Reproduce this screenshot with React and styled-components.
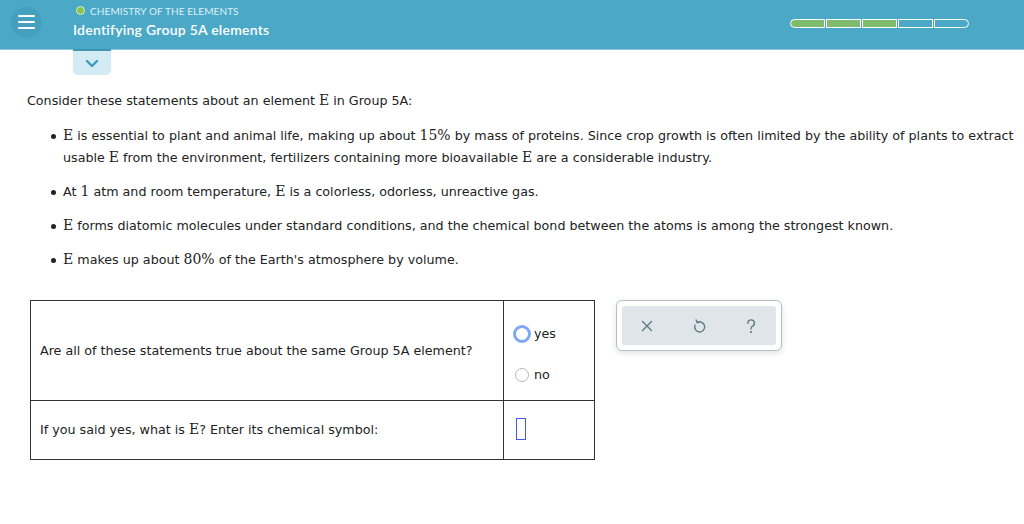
import React from "react";
import styled, { createGlobalStyle } from "styled-components";

const Global = createGlobalStyle`
  html, body { margin: 0; padding: 0; background: #fff; }
  body { font-family: "DejaVu Sans", Verdana, sans-serif; color: #222; }
  * { box-sizing: border-box; }
`;

const Page = styled.div`
  width: 1024px;
  height: 524px;
  overflow: hidden;
  position: relative;
`;

const Header = styled.header`
  height: 50px;
  background: #4ba9c7;
  border-bottom: 1px solid #8ccbdd;
  display: flex;
  align-items: center;
  padding: 0 0 0 11px;
`;

const MenuButton = styled.div`
  width: 31px;
  height: 31px;
  border-radius: 50%;
  background: #45a0bd;
  display: flex;
  flex-direction: column;
  align-items: center;
  justify-content: center;
  gap: 4px;
  margin-top: -5px;
`;

const MenuLine = styled.span`
  display: block;
  width: 17px;
  height: 2px;
  background: #fff;
  border-radius: 1px;
`;

const TitleBlock = styled.div`
  margin-left: 31px;
  display: flex;
  flex-direction: column;
  margin-top: -7px;
`;

const Topic = styled.div`
  display: flex;
  align-items: center;
  gap: 5px;
  font-family: "Lato", "Open Sans", sans-serif;
  font-size: 10px;
  color: #dff1f6;
  letter-spacing: 0.1px;
  margin-left: 3px;
`;

const Dot = styled.span`
  width: 9px;
  height: 9px;
  border-radius: 50%;
  background: #8bc34a;
  border: 1px solid #d8efd0;
`;

const Title = styled.div`
  font-family: "Lato", "Open Sans", sans-serif;
  font-size: 14px;
  font-weight: 600;
  color: #fff;
  margin-top: 4px;
  letter-spacing: 0.25px;
`;

const Progress = styled.div`
  margin-left: auto;
  margin-right: 55px;
  margin-top: -2px;
  display: flex;
  gap: 1px;
`;

const Seg = styled.span`
  width: 35px;
  height: 9px;
  border: 1.5px solid #fff;
  background: ${(p) => (p.$done ? "#80bc6e" : "transparent")};
  border-radius: ${(p) => (p.$first ? "5px 0 0 5px" : p.$last ? "0 5px 5px 0" : "0")};
`;

const Tab = styled.div`
  position: absolute;
  left: 73px;
  top: 49px;
  width: 38px;
  height: 26px;
  background: #d3ecf3;
  border-top: 2px solid #3f95b2;
  border-radius: 0 0 5px 5px;
  display: flex;
  align-items: center;
  justify-content: center;
`;

const Content = styled.main`
  padding: 40px 0 0 27px;
  font-size: 12.7px;
  line-height: 22px;
`;

const Intro = styled.p`
  margin: 0;
`;

const List = styled.ul`
  margin: 13px 0 0;
  padding-left: 36px;
  list-style: none;
`;

const Item = styled.li`
  position: relative;
  margin-bottom: 12px;
  &::before {
    content: "";
    position: absolute;
    left: -12px;
    top: 9px;
    width: 5px;
    height: 5px;
    border-radius: 50%;
    background: #222;
  }
`;

const M = styled.span`
  font-family: "DejaVu Serif", "Liberation Serif", serif;
  font-size: 14px;
  line-height: 1;
`;

const Row = styled.div`
  display: flex;
  align-items: flex-start;
  gap: 21px;
  margin-top: 29px;
  margin-left: 3px;
`;

const Table = styled.table`
  border-collapse: collapse;
  width: 565px;
  border: 1px solid #333;
`;

const Cell = styled.td`
  border: 1px solid #333;
  border-top: ${(p) => (p.$split ? "1px solid #888" : "1px solid #333")};
  padding: 0 9px;
  height: ${(p) => p.$h}px;
  vertical-align: middle;
  width: ${(p) => (p.$w ? `${p.$w}px` : "auto")};
`;

const Choices = styled.div`
  display: flex;
  flex-direction: column;
  gap: 19px;
  margin-top: 7px;
`;

const Choice = styled.label`
  display: flex;
  align-items: center;
  gap: 3px;
  font-size: 12.7px;
  line-height: 22px;
`;

const Radio = styled.span`
  width: ${(p) => (p.$focus ? 18 : 14)}px;
  height: ${(p) => (p.$focus ? 18 : 14)}px;
  border-radius: 50%;
  border: ${(p) => (p.$focus ? "3px solid #80a8f0" : "1px solid #b8b8b8")};
  margin-left: ${(p) => (p.$focus ? 0 : 2)}px;
  margin-right: ${(p) => (p.$focus ? 0 : 2)}px;
  background: #fff;
`;

const Input = styled.span`
  display: block;
  width: 10px;
  height: 22px;
  border: 1.5px solid #3d5ce8;
  margin-left: 3px;
  margin-top: -3px;
`;

const Tools = styled.div`
  width: 166px;
  height: 51px;
  border: 1px solid #b5bec4;
  border-radius: 6px;
  box-shadow: 0 2px 6px rgba(0, 0, 0, 0.12);
  padding: 5px;
  background: #fff;
`;

const ToolInner = styled.div`
  height: 100%;
  background: #dfe5e8;
  border-radius: 3px;
  display: flex;
  align-items: center;
  justify-content: space-between;
  padding: 0 17px;
`;

const ToolIcon = styled.svg`
  width: 16px;
  height: 16px;
  stroke: #5f7a87;
  fill: none;
  stroke-width: 1.4;
  stroke-linecap: round;
`;

export default function App() {
  return (
    <Page>
      <Global />
      <Header>
        <MenuButton>
          <MenuLine />
          <MenuLine />
          <MenuLine />
        </MenuButton>
        <TitleBlock>
          <Topic>
            <Dot />
            CHEMISTRY OF THE ELEMENTS
          </Topic>
          <Title>Identifying Group 5A elements</Title>
        </TitleBlock>
        <Progress>
          {[0, 1, 2, 3, 4].map((i) => (
            <Seg key={i} $done={i < 3} $first={i === 0} $last={i === 4} />
          ))}
        </Progress>
      </Header>
      <Tab>
        <svg width="14" height="9" viewBox="0 0 14 9">
          <path d="M2 2 L7 7 L12 2" stroke="#3b9bc0" strokeWidth="2.4" fill="none" strokeLinecap="round" strokeLinejoin="round" />
        </svg>
      </Tab>
      <Content>
        <Intro>
          Consider these statements about an element <M>E</M> in Group 5A:
        </Intro>
        <List>
          <Item>
            <M>E</M> is essential to plant and animal life, making up about <M>15%</M> by mass of proteins. Since crop growth is often limited by the ability of plants to extract usable <M>E</M> from the environment, fertilizers containing more bioavailable <M>E</M> are a considerable industry.
          </Item>
          <Item>
            At <M>1</M> atm and room temperature, <M>E</M> is a colorless, odorless, unreactive gas.
          </Item>
          <Item>
            <M>E</M> forms diatomic molecules under standard conditions, and the chemical bond between the atoms is among the strongest known.
          </Item>
          <Item>
            <M>E</M> makes up about <M>80%</M> of the Earth's atmosphere by volume.
          </Item>
        </List>
        <Row>
          <Table>
            <tbody>
              <tr>
                <Cell $h={100}>Are all of these statements true about the same Group 5A element?</Cell>
                <Cell $h={100} $w={91}>
                  <Choices>
                    <Choice>
                      <Radio $focus />
                      yes
                    </Choice>
                    <Choice>
                      <Radio />
                      no
                    </Choice>
                  </Choices>
                </Cell>
              </tr>
              <tr>
                <Cell $h={59} $split>
                  If you said yes, what is <M>E</M>? Enter its chemical symbol:
                </Cell>
                <Cell $h={59} $split>
                  <Input />
                </Cell>
              </tr>
            </tbody>
          </Table>
          <Tools>
            <ToolInner>
              <ToolIcon viewBox="0 0 16 16">
                <path d="M3.5 3.5 L12.5 12.5 M12.5 3.5 L3.5 12.5" />
              </ToolIcon>
              <ToolIcon viewBox="0 0 16 16">
                <path d="M6.2 4.6 A5 5 0 1 1 4 7.2" />
                <path d="M5.2 2 L6.4 4.7 L9 3.6" strokeLinejoin="round" />
              </ToolIcon>
              <ToolIcon viewBox="0 0 16 16">
                <path d="M4.8 5.2 A3.3 3.3 0 1 1 9.2 8.3 C8.2 8.8 8 9.5 8 11" />
                <circle cx="8" cy="14" r="0.4" fill="#5f7a87" />
              </ToolIcon>
            </ToolInner>
          </Tools>
        </Row>
      </Content>
    </Page>
  );
}
